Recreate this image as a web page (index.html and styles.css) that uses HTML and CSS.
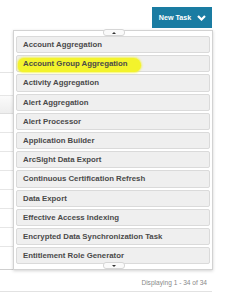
FILE: index.html
```html
<!DOCTYPE html>
<html>
<head>
<meta charset="utf-8">
<link rel="stylesheet" href="styles.css">
</head>
<body>
<div class="page">
  <div class="toolbar">
    <button class="new-task">New Task
      <svg class="chev" width="9" height="6" viewBox="0 0 9 6"><polyline points="1,1 4.5,4.5 8,1" fill="none" stroke="#fff" stroke-width="2.2"/></svg>
    </button>
  </div>
  <div class="grid">
    <div class="grow tall"></div>
    <div class="grow band"></div>
    <div class="grow"></div>
    <div class="grow"></div>
    <div class="grow"></div>
    <div class="grow"></div>
    <div class="grow"></div>
    <div class="grow"></div>
    <div class="grow"></div>
    <div class="grow tall last"></div>
  </div>
  <div class="footer">Displaying 1 - 34 of 34</div>

  <div class="menu">
    <div class="tab tab-top"><span class="tri-up"></span></div>
    <ul class="items">
      <li class="item">Account Aggregation</li>
      <li class="item marked"><span class="marker"></span><span class="label">Account Group Aggregation</span></li>
      <li class="item">Activity Aggregation</li>
      <li class="item">Alert Aggregation</li>
      <li class="item">Alert Processor</li>
      <li class="item">Application Builder</li>
      <li class="item">ArcSight Data Export</li>
      <li class="item">Continuous Certification Refresh</li>
      <li class="item">Data Export</li>
      <li class="item">Effective Access Indexing</li>
      <li class="item">Encrypted Data Synchronization Task</li>
      <li class="item">Entitlement Role Generator</li>
    </ul>
    <div class="tab tab-bottom"><span class="tri-down"></span></div>
  </div>
</div>
</body>
</html>
```
FILE: styles.css
```css
html, body {
  margin: 0;
  padding: 0;
  background: #fff;
}
body {
  font-family: "Liberation Sans", Arial, sans-serif;
}
.page {
  position: relative;
  width: 227px;
  height: 300px;
  overflow: hidden;
}
.toolbar {
  height: 72px;
  box-sizing: border-box;
  padding: 7px 15px 0 0;
  display: flex;
  justify-content: flex-end;
  align-items: flex-start;
}
.new-task {
  width: 60px;
  height: 21px;
  border: 0;
  margin: 0;
  padding: 0 0 0 1px;
  background: #1a7ca2;
  color: #fff;
  font-family: "Liberation Sans", Arial, sans-serif;
  font-weight: bold;
  font-size: 7.2px;
  display: flex;
  align-items: center;
  justify-content: center;
  gap: 6px;
}
.chev {
  display: block;
}
.grid {
  width: 212px;
  border-top: 1px solid #e4e4e4;
}
.grow {
  height: 18px;
  border-bottom: 1px solid #e6e6e6;
}
.grow.tall {
  height: 22px;
}
.grow.band {
  height: 17px;
  background: linear-gradient(#fbfbfb, #eeeeee);
  border-bottom-color: #dedede;
}
.grow.last {
  border-bottom-color: #cfcfcf;
}
.footer {
  width: 212px;
  height: 22px;
  box-sizing: border-box;
  border-bottom: 1px solid #e2e2e2;
  display: flex;
  align-items: center;
  justify-content: flex-end;
  padding: 4px 5px 0 0;
  font-size: 6.6px;
  color: #8a8a8a;
}
.menu {
  position: absolute;
  left: 13px;
  top: 30px;
  width: 200px;
  box-sizing: border-box;
  border: 1px solid #d2d2d2;
  background: #fff;
  padding: 5px 2px 5px 2px;
  box-shadow: 0 1px 3px rgba(0, 0, 0, 0.18);
}
.items {
  list-style: none;
  margin: 0;
  padding: 0;
  display: flex;
  flex-direction: column;
  gap: 2px;
}
.item {
  position: relative;
  height: 17.2px;
  box-sizing: border-box;
  border: 1px solid #dadada;
  border-radius: 2px;
  background: #efefef;
  padding-left: 6px;
  display: flex;
  align-items: center;
  font-size: 7.8px;
  font-weight: bold;
  color: #4a4a4a;
  white-space: nowrap;
}
.marker {
  position: absolute;
  left: 1px;
  top: 2px;
  width: 123px;
  height: 14px;
  border-radius: 7px 9px 8px 6px;
  background: #f3f32c;
  box-shadow: 0 0 2px 1px rgba(243, 243, 44, 0.7);
}
.label {
  position: relative;
}
.tab {
  position: absolute;
  left: 89px;
  width: 20px;
  height: 5px;
  background: #fafafa;
  border: 1px solid #d6d6d6;
  border-radius: 3px;
  display: flex;
  align-items: center;
  justify-content: center;
}
.tab-top {
  top: -2px;
}
.tab-bottom {
  bottom: 0px;
}
.tri-up {
  width: 0;
  height: 0;
  border-left: 2px solid transparent;
  border-right: 2px solid transparent;
  border-bottom: 2px solid #333;
}
.tri-down {
  width: 0;
  height: 0;
  border-left: 2px solid transparent;
  border-right: 2px solid transparent;
  border-top: 2px solid #333;
}
```
